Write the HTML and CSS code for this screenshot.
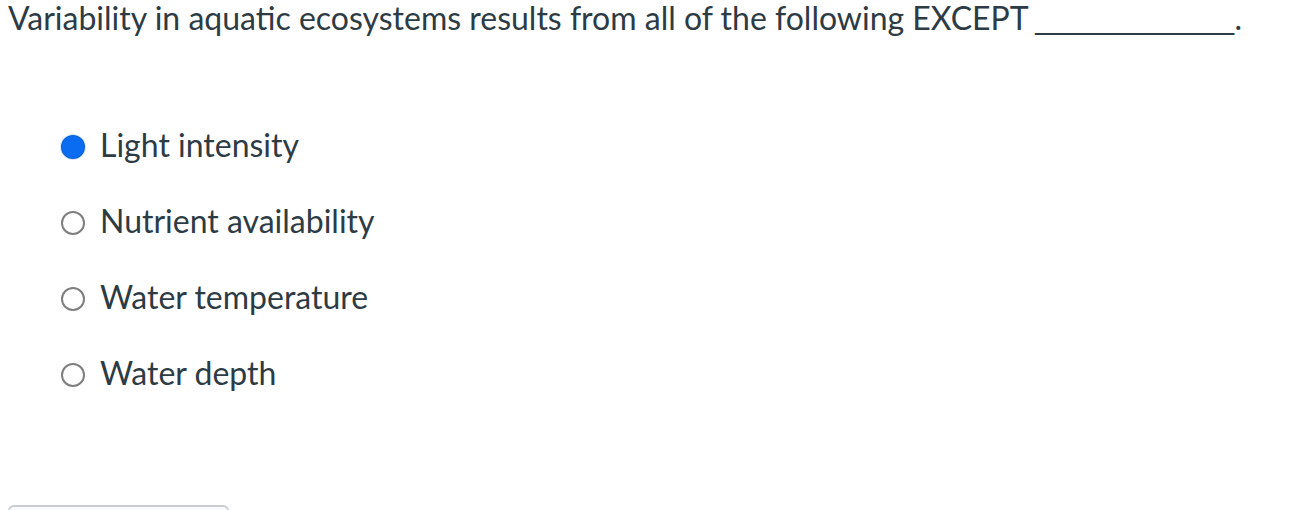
FILE: index.html
```html
<html>
	<head>
		<meta charset="UTF-8">
		<title>Quiz question</title>
		<link rel="stylesheet" href="styles.css">
	</head>
	<body>
		<div class="question">
			<p class="text">Variability in aquatic ecosystems results from all of the following EXCEPT <span class="blank">_________________</span>.</p>
			<div class="answers">
				<label class="answer">
					<input type="radio" name="q1" checked>
					<span class="dot"></span>
					<span class="label">Light intensity</span>
				</label>
				<label class="answer">
					<input type="radio" name="q1">
					<span class="dot"></span>
					<span class="label">Nutrient availability</span>
				</label>
				<label class="answer">
					<input type="radio" name="q1">
					<span class="dot"></span>
					<span class="label">Water temperature</span>
				</label>
				<label class="answer">
					<input type="radio" name="q1">
					<span class="dot"></span>
					<span class="label">Water depth</span>
				</label>
			</div>
			<div class="actions">
				<button class="next" type="button"></button>
			</div>
		</div>
	</body>
</html>
```
FILE: styles.css
```css
body {
	margin: 0 8px;
	background: #FFFFFF;
	color: #2D3B45;
	font-family: Lato, "Open Sans", sans-serif;
	overflow: hidden;
}
.text {
	margin: 0;
	font-size: 32px;
	line-height: 36px;
}
.blank {
	letter-spacing: -3px;
	margin-left: -2px;
	margin-right: 2px;
}
.answers {
	padding: 89px 0 0 53px;
	display: flex;
	flex-direction: column;
	gap: 36px;
}
.answer {
	display: flex;
	align-items: flex-start;
	gap: 15px;
	font-size: 32px;
	line-height: 40px;
	cursor: pointer;
}
.answer input {
	display: none;
}
.dot {
	width: 20px;
	height: 20px;
	margin-top: 10px;
	border: 2px solid #7F7F7F;
	border-radius: 50%;
	background: #FFFFFF;
	flex-shrink: 0;
}
.answer input:checked + .dot {
	width: 22px;
	height: 22px;
	border: none;
	background: #0A6CF0;
	box-shadow: 0 0 0 1px #0C5FD0, 0 0 0 2px #D6E6FC;
	margin: 11px 1px 0;
}
.actions {
	padding-top: 112px;
}
.next {
	width: 221px;
	height: 40px;
	background: #FAFAFA;
	border: 2px solid #C7CDD1;
	border-radius: 6px;
}
```
